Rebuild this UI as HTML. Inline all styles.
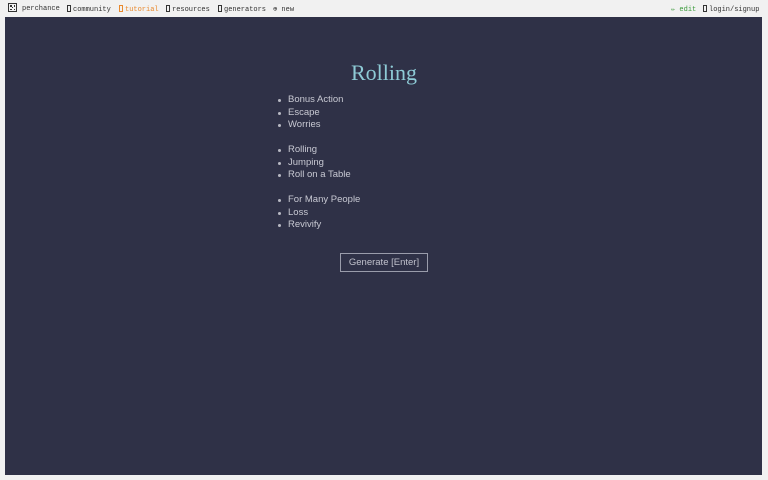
<!DOCTYPE html>
<html><head><meta charset="utf-8"><style>
html,body{margin:0;padding:0;width:768px;height:480px;overflow:hidden;background:#f1f1f1;}
.nav{position:absolute;top:0;left:0;width:768px;height:17px;font-family:"Liberation Mono",monospace;font-size:7px;color:#333;}
.nav span{position:absolute;top:5px;white-space:nowrap;}
.box{display:inline-block;width:4px;height:7px;border:1px solid #333;vertical-align:-1px;margin-right:2px;box-sizing:border-box;}
.frame{position:absolute;left:5px;top:17px;width:757px;height:458px;background:#2f3147;}
h1{position:absolute;top:60px;left:0;width:768px;text-align:center;margin:0;font-family:"Liberation Serif",serif;font-weight:normal;font-size:22px;color:#8ecbd6;}
ul{position:absolute;left:278px;margin:0;padding:0;list-style:none;font-family:"Liberation Sans",sans-serif;font-size:9.5px;color:#c8c9d3;}
li{height:12.5px;line-height:12.5px;padding-left:10px;position:relative;}
li:before{content:"";position:absolute;left:0;top:5px;width:3px;height:3px;background:#b8b9c3;border-radius:50%;}
.btn{position:absolute;left:340px;top:253px;width:86px;height:17px;border:1px solid #9a9cab;box-sizing:content-box;font-family:"Liberation Sans",sans-serif;font-size:9.5px;color:#c0c1cc;text-align:center;line-height:18px;}
.die{position:absolute;left:8px;top:3px;width:9px;height:9px;border:1px solid #333;box-sizing:border-box;}
.die i{position:absolute;width:1.5px;height:1.5px;background:#333;}
</style></head><body>
<div class="nav">
<div class="die"><i style="left:1px;top:1px"></i><i style="right:1px;top:1px"></i><i style="left:2.7px;top:2.7px"></i><i style="left:1px;bottom:1px"></i><i style="right:1px;bottom:1px"></i></div>
<span style="left:22px;">perchance</span>
<span style="left:67px;"><i class="box"></i>community</span>
<span style="left:119px;color:#e8892e;"><i class="box" style="border-color:#e8892e"></i>tutorial</span>
<span style="left:166px;"><i class="box"></i>resources</span>
<span style="left:218px;"><i class="box"></i>generators</span>
<span style="left:273px;">⊕ new</span>
<span style="left:671px;color:#3a9a3a;">✏ edit</span>
<span style="left:703px;"><i class="box"></i>login/signup</span>
</div>
<div class="frame"></div>
<h1>Rolling</h1>
<ul style="top:94px"><li>Bonus Action</li><li>Escape</li><li>Worries</li></ul>
<ul style="top:144px"><li>Rolling</li><li>Jumping</li><li>Roll on a Table</li></ul>
<ul style="top:194px"><li>For Many People</li><li>Loss</li><li>Revivify</li></ul>
<div class="btn">Generate [Enter]</div>
</body></html>
